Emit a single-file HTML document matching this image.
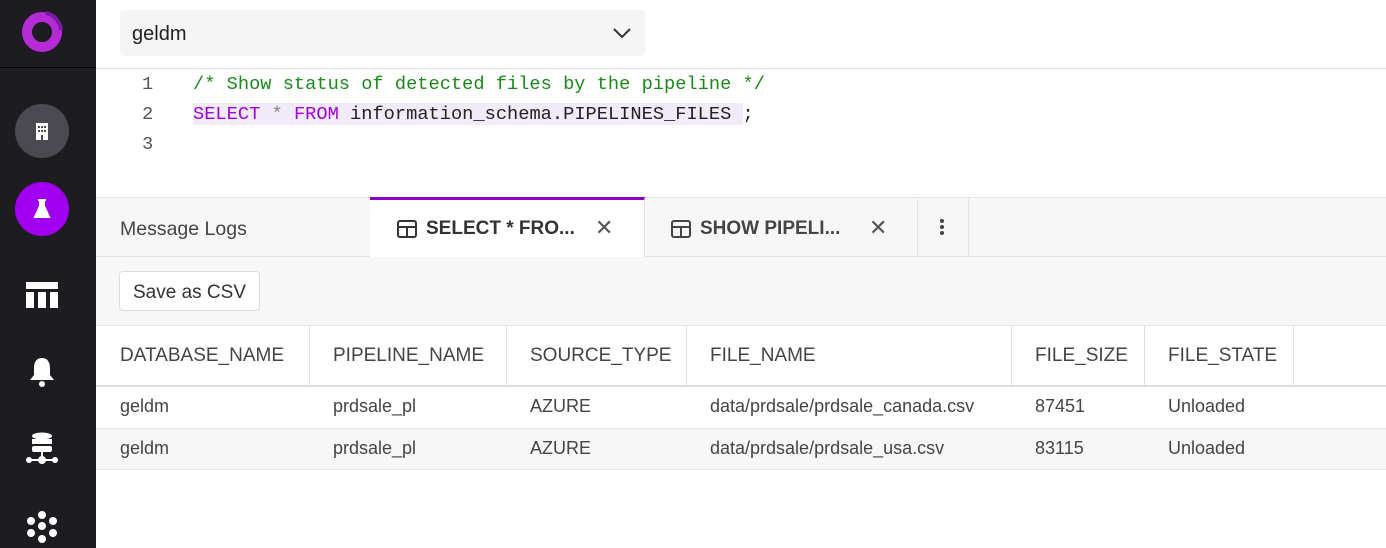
<!DOCTYPE html><html><head><style>
*{margin:0;padding:0;box-sizing:border-box}
body{width:1386px;height:548px;overflow:hidden;background:#fff;font-family:"Liberation Sans",sans-serif;color:#333;position:relative}
.sb{position:absolute;left:0;top:0;width:96px;height:548px;background:#1d1c21}
.sb .top{height:68px;border-bottom:1px solid #000}
.ic{position:absolute;left:15px;width:54px;height:54px;border-radius:50%;display:flex;align-items:center;justify-content:center}
.a{position:absolute}
.code{font-family:"Liberation Mono",monospace;font-size:18.7px;position:absolute}
</style></head><body>
<div class="sb"><div class="top"></div>
<svg class="a" style="left:20px;top:10px" width="44" height="44" viewBox="0 0 44 44"><circle cx="22" cy="22" r="15" fill="none" stroke="#b52bd6" stroke-width="10"/><path d="M26 3 A19 19 0 0 1 41 20" stroke="#7a1aa0" stroke-width="4" fill="none"/></svg>
<div class="ic" style="top:104px;background:#4a4a50"><svg width="14" height="18"><rect x="1" y="1" width="12" height="17" fill="#fff"/><rect x="3" y="4" width="2" height="2" fill="#4a4a50"/><rect x="6" y="4" width="2" height="2" fill="#4a4a50"/><rect x="9" y="4" width="2" height="2" fill="#4a4a50"/><rect x="3" y="8" width="2" height="2" fill="#4a4a50"/><rect x="6" y="8" width="2" height="2" fill="#4a4a50"/><rect x="9" y="8" width="2" height="2" fill="#4a4a50"/><rect x="6" y="13" width="2" height="5" fill="#4a4a50"/></svg></div>
<div class="ic" style="top:182px;background:#a100f0"><svg width="18" height="20"><path d="M5 1h8M7 1v6L2 18h14L11 7V1" fill="#fff" stroke="#fff" stroke-width="2"/></svg></div>
<svg class="a" style="left:26px;top:282px" width="32" height="26"><rect x="0" y="0" width="32" height="7" fill="#fff"/><rect x="0" y="10" width="8" height="16" fill="#fff"/><rect x="12" y="10" width="8" height="16" fill="#fff"/><rect x="24" y="10" width="8" height="16" fill="#fff"/></svg>
<svg class="a" style="left:28px;top:356px" width="28" height="32"><path d="M14 2c-6 0-8 5-8 10v7l-4 5h24l-4-5v-7c0-5-2-10-8-10z" fill="#fff"/><circle cx="14" cy="28" r="3" fill="#fff"/></svg>
<svg class="a" style="left:26px;top:432px" width="32" height="34"><ellipse cx="16" cy="4" rx="10" ry="3.5" fill="#fff"/><rect x="6" y="7" width="20" height="5" fill="#fff"/><rect x="6" y="14" width="20" height="6" rx="2" fill="#fff"/><rect x="15" y="20" width="2" height="8" fill="#fff"/><rect x="2" y="27" width="28" height="2" fill="#fff"/><circle cx="3" cy="28" r="3" fill="#fff"/><circle cx="16" cy="28" r="4" fill="#fff"/><circle cx="29" cy="28" r="3" fill="#fff"/></svg>
<svg class="a" style="left:26px;top:510px" width="32" height="34"><g fill="#fff"><circle cx="16" cy="5" r="4"/><circle cx="5" cy="11" r="4"/><circle cx="27" cy="11" r="4"/><circle cx="16" cy="16" r="4"/><circle cx="5" cy="23" r="4"/><circle cx="27" cy="23" r="4"/><circle cx="16" cy="29" r="4"/></g></svg>
</div>
<div class="a" style="left:120px;top:10px;width:525px;height:46px;background:#f5f5f5;border-radius:4px;font-size:20px;padding:13px 12px;color:#222">geldm
<svg class="a" style="right:14px;top:18px" width="18" height="10"><path d="M1 1l8 8 8-8" stroke="#333" stroke-width="2" fill="none"/></svg></div>
<div class="a" style="left:96px;top:68px;width:1290px;height:1px;background:#e4e4e4"></div>
<div class="code" style="left:142px;top:69px;color:#555;line-height:30px">1<br>2<br>3</div>
<div class="code" style="left:193px;top:69px;line-height:30px;white-space:pre"><span style="color:#1a8a1a">/* Show status of detected files by the pipeline */</span><br><span style="background:#f1eaf8"><span style="color:#a000e0">SELECT</span> <span style="color:#888">*</span> <span style="color:#a000e0">FROM</span> <span style="color:#222">information_schema.PIPELINES_FILES</span> </span><span style="color:#222">;</span></div>
<div class="a" style="left:96px;top:197px;width:1290px;height:128px;background:#f7f7f7;border-top:1px solid #e4e4e4"></div>
<div class="a" style="left:96px;top:256px;width:1290px;height:1px;background:#e4e4e4"></div>
<div class="a" style="left:120px;top:218px;font-size:19.5px;color:#444">Message Logs</div>
<div class="a" style="left:370px;top:197px;width:275px;height:60px;background:#fff;border-top:3px solid #8a00c8;border-right:1px solid #e4e4e4"></div>
<svg class="a" style="left:397px;top:220px" width="20" height="18"><rect x="1" y="1" width="18" height="16" rx="2" fill="none" stroke="#333" stroke-width="2"/><path d="M1 7h18M10 7v10" stroke="#333" stroke-width="2"/></svg>
<div class="a" style="left:426px;top:218px;font-size:19px;font-weight:bold;color:#333">SELECT * FRO...</div>
<div class="a" style="left:595px;top:215px;font-size:22px;color:#555">✕</div>
<svg class="a" style="left:671px;top:220px" width="20" height="18"><rect x="1" y="1" width="18" height="16" rx="2" fill="none" stroke="#444" stroke-width="2"/><path d="M1 7h18M10 7v10" stroke="#444" stroke-width="2"/></svg>
<div class="a" style="left:700px;top:218px;font-size:19px;font-weight:bold;color:#444">SHOW PIPELI...</div>
<div class="a" style="left:869px;top:215px;font-size:22px;color:#555">✕</div>
<div class="a" style="left:917px;top:198px;width:1px;height:58px;background:#e4e4e4"></div>
<div class="a" style="left:968px;top:198px;width:1px;height:58px;background:#e4e4e4"></div>
<svg class="a" style="left:939px;top:218px" width="6" height="18"><circle cx="3" cy="3" r="2" fill="#444"/><circle cx="3" cy="9" r="2" fill="#444"/><circle cx="3" cy="15" r="2" fill="#444"/></svg>
<div class="a" style="left:119px;top:271px;width:141px;height:40px;background:#fff;border:1px solid #ddd;border-radius:4px;font-size:19px;padding:10px 13px;color:#333">Save as CSV</div>
<div class="a" style="left:96px;top:325px;width:1290px;height:1px;background:#e4e4e4"></div>
<div class="a" style="left:96px;top:385px;width:1290px;height:2px;background:#ddd"></div>
<div class="a" style="left:96px;top:428px;width:1290px;height:42px;background:#f7f7f7;border-top:1px solid #e4e4e4;border-bottom:1px solid #e4e4e4"></div>
<div class="a" style="left:309px;top:326px;width:1px;height:59px;background:#e0e0e0"></div>
<div class="a" style="left:506px;top:326px;width:1px;height:59px;background:#e0e0e0"></div>
<div class="a" style="left:686px;top:326px;width:1px;height:59px;background:#e0e0e0"></div>
<div class="a" style="left:1011px;top:326px;width:1px;height:59px;background:#e0e0e0"></div>
<div class="a" style="left:1144px;top:326px;width:1px;height:59px;background:#e0e0e0"></div>
<div class="a" style="left:1293px;top:326px;width:1px;height:59px;background:#e0e0e0"></div>
<div class="a" style="top:345px;left:0;font-size:19px;color:#444;width:1386px;height:20px">
<span class="a" style="left:120px">DATABASE_NAME</span><span class="a" style="left:333px">PIPELINE_NAME</span><span class="a" style="left:530px">SOURCE_TYPE</span><span class="a" style="left:710px">FILE_NAME</span><span class="a" style="left:1035px">FILE_SIZE</span><span class="a" style="left:1168px">FILE_STATE</span></div>
<div class="a" style="top:396px;left:0;font-size:18px;color:#444;width:1386px">
<span class="a" style="left:120px">geldm</span><span class="a" style="left:333px">prdsale_pl</span><span class="a" style="left:530px">AZURE</span><span class="a" style="left:710px">data/prdsale/prdsale_canada.csv</span><span class="a" style="left:1035px">87451</span><span class="a" style="left:1168px">Unloaded</span></div>
<div class="a" style="top:438px;left:0;font-size:18px;color:#444;width:1386px">
<span class="a" style="left:120px">geldm</span><span class="a" style="left:333px">prdsale_pl</span><span class="a" style="left:530px">AZURE</span><span class="a" style="left:710px">data/prdsale/prdsale_usa.csv</span><span class="a" style="left:1035px">83115</span><span class="a" style="left:1168px">Unloaded</span></div>
</body></html>
